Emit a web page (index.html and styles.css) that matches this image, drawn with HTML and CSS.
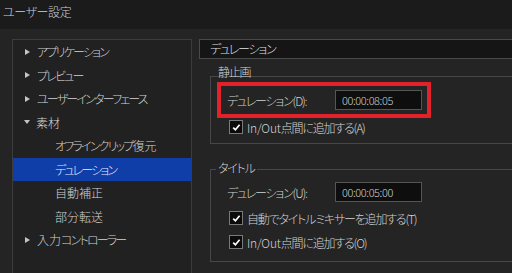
FILE: index.html
```html
<!DOCTYPE html>
<html lang="ja">
<head>
<meta charset="utf-8">
<title>ユーザー設定</title>
<link rel="stylesheet" href="styles.css">
</head>
<body>
<div class="titlebar">ユーザー設定</div>
<div class="main">
  <div class="tree">
    <div class="row"><span class="tri right"></span>アプリケーション</div>
    <div class="row"><span class="tri right"></span>プレビュー</div>
    <div class="row"><span class="tri right"></span>ユーザーインターフェース</div>
    <div class="row"><span class="tri down"></span><span class="kj">素材</span></div>
    <div class="row sub">オフラインクリップ<span class="kj">復元</span></div>
    <div class="row sub sel">デュレーション</div>
    <div class="row sub"><span class="kj">自動補正</span></div>
    <div class="row sub"><span class="kj">部分転送</span></div>
    <div class="row"><span class="tri right"></span><span class="kj">入力</span>コントローラー</div>
  </div>
  <div class="pane">
    <div class="pane-head">デュレーション</div>
    <div class="group g1">
      <span class="legend">静止画</span>
      <div class="highlight">
        <span class="label">デュレーション(D):</span>
        <span class="field">00:00:08:05</span>
      </div>
      <div class="check"><span class="box"><svg viewBox="0 0 11 11" width="11" height="11"><polyline points="2.2,5.6 4.4,7.8 8.6,2.8" fill="none" stroke="#fff" stroke-width="1.7"/></svg></span><span class="lat">In/Out</span>点間に追加する(A)</div>
    </div>
    <div class="group g2">
      <span class="legend">タイトル</span>
      <div class="frow">
        <span class="label">デュレーション(U):</span>
        <span class="field">00:00:05:00</span>
      </div>
      <div class="check"><span class="box"><svg viewBox="0 0 11 11" width="11" height="11"><polyline points="2.2,5.6 4.4,7.8 8.6,2.8" fill="none" stroke="#fff" stroke-width="1.7"/></svg></span>自動でタイトルミキサーを追加する(T)</div>
      <div class="check"><span class="box"><svg viewBox="0 0 11 11" width="11" height="11"><polyline points="2.2,5.6 4.4,7.8 8.6,2.8" fill="none" stroke="#fff" stroke-width="1.7"/></svg></span><span class="lat">In/Out</span>点間に追加する(O)</div>
    </div>
  </div>
</div>
</body>
</html>
```

FILE: styles.css
```css
html, body {
  margin: 0;
  padding: 0;
}
body {
  width: 512px;
  height: 273px;
  overflow: hidden;
  background: #242424;
  color: #d2d2d2;
  font-family: "Noto Sans CJK JP", "Noto Sans", sans-serif;
  font-size: 12px;
  font-weight: 300;
  letter-spacing: -1.2px;
  font-feature-settings: "palt";
}
* {
  box-sizing: border-box;
}
.titlebar {
  height: 29px;
  background: #1b1b1b;
  padding-left: 3px;
  line-height: 24px;
  color: #cfcfcf;
  letter-spacing: -0.4px;
}
.main {
  display: flex;
  gap: 7px;
  padding: 10px 0 0 12px;
}
.tree {
  flex: none;
  width: 180px;
  height: 260px;
  border: 1px solid #3c3c3c;
  background: #212121;
  letter-spacing: -1.8px;
}
.kj {
  letter-spacing: 0;
}
.lat {
  letter-spacing: -0.2px;
}
.row {
  height: 23.5px;
  display: flex;
  align-items: center;
  padding-left: 12px;
  white-space: nowrap;
}
.row.sub {
  padding-left: 42px;
}
.row.sel {
  background: #0f3ea8;
  color: #e8ecff;
}
.tri {
  width: 0;
  height: 0;
  margin-right: 7px;
}
.tri.right {
  border-top: 3px solid transparent;
  border-bottom: 3px solid transparent;
  border-left: 5px solid #c4c4c4;
}
.tri.down {
  margin-left: -1px;
  margin-right: 6px;
  border-left: 3.5px solid transparent;
  border-right: 3.5px solid transparent;
  border-top: 4px solid #c4c4c4;
}
.pane {
  flex: none;
  width: 340px;
}
.pane-head {
  height: 20px;
  border: 1px solid #4a4a4a;
  background: #151515;
  padding-left: 10px;
  line-height: 18px;
  color: #e2e2e2;
}
.group {
  position: relative;
  border: 1px solid #474747;
  margin-left: 11px;
  padding-left: 6px;
}
.legend {
  position: absolute;
  top: -10px;
  left: 5px;
  padding: 0 2px;
  background: #242424;
  line-height: 16px;
}
.g1 .legend {
  top: -13px;
  background: transparent;
}
.g1 {
  margin-top: 17px;
  padding-top: 5px;
  padding-bottom: 7px;
}
.g2 {
  margin-top: 25px;
  padding-top: 12px;
  padding-bottom: 7px;
}
.highlight {
  width: 214px;
  height: 36px;
  border: 4px solid #e3212b;
  display: flex;
  align-items: center;
  padding-left: 6px;
}
.frow {
  display: flex;
  align-items: center;
  height: 20px;
  padding-left: 10px;
}
.label {
  flex: none;
  width: 108px;
  white-space: nowrap;
}
.field {
  flex: none;
  width: 87px;
  height: 20px;
  border: 1px solid #555;
  background: #0e0e0e;
  padding-left: 6px;
  line-height: 18px;
  font-size: 11px;
  color: #cdcdcd;
  letter-spacing: -0.4px;
}
.check {
  display: flex;
  align-items: center;
  height: 18px;
  padding-left: 12px;
  white-space: nowrap;
}
.g2 .check {
  height: 24px;
}
.g2 .frow + .check {
  margin-top: 4px;
}
.box {
  flex: none;
  width: 14px;
  height: 14px;
  border: 1px solid #7a7a7a;
  background: #0b0b0b;
  margin-right: 4px;
  display: flex;
  align-items: center;
  justify-content: center;
}
.box svg {
  display: block;
}
```
